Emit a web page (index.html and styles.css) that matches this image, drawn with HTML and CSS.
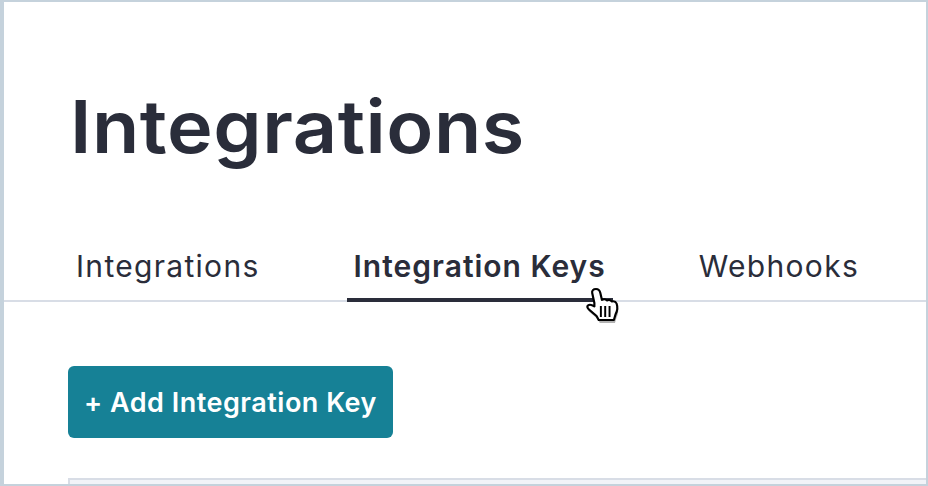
FILE: index.html
```html
<!DOCTYPE html>
<html lang="en">
<head>
    <meta charset="UTF-8">
    <title>Integrations</title>
    <link rel="stylesheet" href="styles.css">
</head>
<body>
    <div class="frame">
        <h1 class="page-title">Integrations</h1>
        <div class="tabs">
            <a class="tab">Integrations</a>
            <a class="tab active">Integration Keys</a>
            <a class="tab">Webhooks</a>
        </div>
        <div class="content">
            <button class="add-button">+ Add Integration Key</button>
            <div class="table-head"></div>
        </div>
        <!-- hand cursor over the active tab -->
        <svg class="cursor" width="39" height="40" viewBox="0 0 36 40" preserveAspectRatio="none">
            <path d="M12 4c2.500 0 3.500 1.500 4 4l1.500 7c1.500-1 3.500-.8 4.500.5 1.500-.8 3.500-.4 4.500 1 1.700-.6 3.700 0 4.500 2 1 3 .5 8-1 11l-1.500 5.500H14.500l-2-4-7-6.500c-1.500-1.500-2-3-1-4 1.500-1.300 4-.5 6 1V18L8.500 8C8 5.500 9.500 4 12 4z" fill="#000" opacity=".3" transform="translate(1 3)"/>
            <path d="M12 4c2.500 0 3.500 1.500 4 4l1.500 7c1.500-1 3.500-.8 4.500.5 1.500-.8 3.500-.4 4.500 1 1.700-.6 3.700 0 4.500 2 1 3 .5 8-1 11l-1.500 5.500H14.500l-2-4-7-6.500c-1.500-1.500-2-3-1-4 1.500-1.300 4-.5 6 1V18L8.500 8C8 5.500 9.500 4 12 4z" fill="#fff" stroke="#000" stroke-width="2" stroke-linejoin="round"/>
            <path d="M16.500 21v11M20.500 21v11M24.500 21v11" stroke="#000" stroke-width="1.800" fill="none"/>
        </svg>
    </div>
</body>
</html>
```

FILE: styles.css
```css
* { box-sizing: border-box; }
html, body { margin: 0; padding: 0; }
body {
    width: 928px;
    height: 486px;
    overflow: hidden;
    background-color: #fff;
    font-family: Inter, sans-serif;
    color: #2a2d3a;
}
.frame {
    position: relative;
    width: 928px;
    height: 486px;
    overflow: hidden;
    border-style: solid;
    border-color: #c5d2dc;
    border-width: 2px 2px 2px 4px;
}
.page-title {
    width: 500px;
    margin: 0 0 0 66px;
    padding-top: 81px;
    font-size: 73px;
    line-height: 88px;
    font-weight: 600;
    letter-spacing: .5px;
    color: #2a2d3a;
    white-space: nowrap;
    transform: scaleX(1.06);
    transform-origin: left;
}
.tabs {
    display: flex;
    margin-top: 79px;
    height: 52px;
    padding-left: 64px;
    border-bottom: 2px solid #d8dde6;
}
.tab {
    flex-shrink: 0;
    height: 52px;
    padding: 0 7px 0 8px;
    margin-right: 78px;
    font-size: 30px;
    line-height: 32px;
    letter-spacing: 1.3px;
    white-space: nowrap;
}
.tab:first-child {
    margin-right: 80px;
}
.tab.active {
    padding: 0 7px;
    font-weight: 600;
    letter-spacing: 1px;
    border-bottom: 4px solid #2a2d3a;
}
.content {
    padding: 64px 0 0 64px;
}
.add-button {
    display: block;
    width: 325px;
    height: 72px;
    padding: 0;
    border: none;
    border-radius: 6px;
    background-color: #168196;
    color: #fff;
    font-family: Inter, sans-serif;
    font-size: 27px;
    font-weight: 600;
    letter-spacing: .5px;
}
.table-head {
    margin-top: 40px;
    height: 30px;
    border: 2px solid #d8dde6;
    border-right: none;
    background-color: #f2f3f8;
}
.cursor {
    position: absolute;
    left: 579px;
    top: 283px;
}
```
